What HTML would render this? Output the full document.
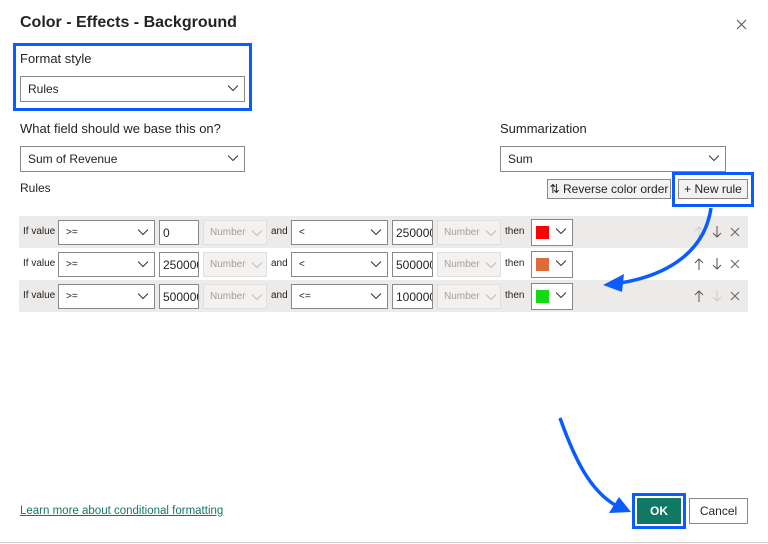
<!DOCTYPE html><html><head><style>
body{margin:0;width:768px;height:544px;background:#fff;font-family:"Liberation Sans",sans-serif;color:#252423;position:relative;overflow:hidden}
.a{position:absolute}
.dd{position:absolute;border:1px solid #8a8886;background:#fff;box-sizing:border-box;font-size:12px;padding-left:7px;display:flex;align-items:center}
.dd svg{position:absolute;right:6px;top:50%;margin-top:-4px}
.inp{position:absolute;border:1px solid #8a8886;background:#fff;box-sizing:border-box;font-size:12px;padding-left:3px;display:flex;align-items:center;overflow:hidden;white-space:nowrap}
.num{position:absolute;border:1px solid #e1dfdd;background:#f3f2f1;box-sizing:border-box;font-size:10px;color:#a19f9d;padding-left:6px;display:flex;align-items:center}
.num svg{position:absolute;right:4px;top:50%;margin-top:-3px}
.row{position:absolute;left:19px;width:729px;height:32px}
.sm{position:absolute;font-size:10px}
.blue{position:absolute;border:3px solid #0a5cff;box-sizing:border-box}
</style></head><body>
<div class="a" style="left:20px;top:14px;font-size:16px;font-weight:bold;color:#252423">Color - Effects - Background</div>
<svg class="a" style="left:736px;top:19px" width="11" height="11"><path d="M1 1L10 10M10 1L1 10" stroke="#605e5c" stroke-width="1.2"/></svg>
<div class="blue" style="left:13px;top:43px;width:239px;height:68px"></div>
<div class="a" style="left:20px;top:51px;font-size:13px">Format style</div>
<div class="dd" style="left:20px;top:76px;width:225px;height:26px">Rules<svg width="10" height="6"><path d="M0 0.5L5 5.5L10 0.5" fill="none" stroke="#333"/></svg></div>
<div class="a" style="left:20px;top:121px;font-size:13px">What field should we base this on?</div>
<div class="dd" style="left:20px;top:146px;width:225px;height:26px">Sum of Revenue<svg width="10" height="6"><path d="M0 0.5L5 5.5L10 0.5" fill="none" stroke="#333"/></svg></div>
<div class="a" style="left:500px;top:121px;font-size:13px">Summarization</div>
<div class="dd" style="left:500px;top:146px;width:226px;height:26px">Sum<svg width="10" height="6"><path d="M0 0.5L5 5.5L10 0.5" fill="none" stroke="#333"/></svg></div>
<div class="a" style="left:20px;top:181px;font-size:12px">Rules</div>
<div class="a" style="left:547px;top:179px;width:124px;height:20px;border:1px solid #8a8886;background:#f3f2f1;box-sizing:border-box;font-size:12px;text-align:center;line-height:18px">⇅ Reverse color order</div>
<div class="blue" style="left:672px;top:172px;width:82px;height:35px"></div>
<div class="a" style="left:678px;top:179px;width:70px;height:20px;border:1px solid #8a8886;background:#f3f2f1;box-sizing:border-box;font-size:12px;text-align:center;line-height:18px">+ New rule</div>

<div class="row" style="top:216px;background:#edebe9"></div>
<div class="row" style="top:248px;background:#fff"></div>
<div class="row" style="top:280px;background:#edebe9"></div>

<div id="r"></div>
<script>
var rows=[["0","<","250000","#ff0000",0],["250000","<","500000","#e06a37",0],["500000","<=","1000000","#10dd10",1]];
var h="";
var ch='<svg width="10" height="6"><path d="M0 0.5L5 5.5L10 0.5" fill="none" stroke="#333"/></svg>';
var chg='<svg width="10" height="6"><path d="M0 0.5L5 5.5L10 0.5" fill="none" stroke="#bbb"/></svg>';
rows.forEach(function(r,i){var y=216+i*32;
h+='<div class="sm" style="left:23px;top:'+(y+10)+'px">If value</div>';
h+='<div class="dd" style="left:58px;top:'+(y+4)+'px;width:97px;height:25px;font-size:10px">&gt;=' +ch+'</div>';
h+='<div class="inp" style="left:159px;top:'+(y+4)+'px;width:40px;height:25px">'+r[0]+'</div>';
h+='<div class="num" style="left:203px;top:'+(y+4)+'px;width:64px;height:25px">Number'+chg+'</div>';
h+='<div class="sm" style="left:271px;top:'+(y+10)+'px">and</div>';
h+='<div class="dd" style="left:291px;top:'+(y+4)+'px;width:97px;height:25px;font-size:10px">'+r[1].replace("<","&lt;")+ch+'</div>';
h+='<div class="inp" style="left:392px;top:'+(y+4)+'px;width:41px;height:25px">'+r[2]+'</div>';
h+='<div class="num" style="left:437px;top:'+(y+4)+'px;width:64px;height:25px">Number'+chg+'</div>';
h+='<div class="sm" style="left:505px;top:'+(y+10)+'px">then</div>';
h+='<div class="dd" style="left:531px;top:'+(y+3)+'px;width:42px;height:27px"><span style="width:13px;height:13px;background:'+r[3]+';display:block;margin-left:-3px"></span><svg style="top:8px;margin:0" width="10" height="6"><path d="M0 0.5L5 5.5L10 0.5" fill="none" stroke="#333"/></svg></div>';
var up=i==0?"#ccc":"#555",dn=i==2?"#ccc":"#555";
h+='<svg class="a" style="left:694px;top:'+(y+10)+'px" width="50" height="12"><path d="M5 12V1M1 5L5 1L9 5" fill="none" stroke="'+up+'"/><path d="M23 0V11M19 7L23 11L27 7" fill="none" stroke="'+dn+'"/><path d="M37 2L45 10M45 2L37 10" stroke="#666"/></svg>';
});
document.getElementById("r").outerHTML=h;
</script>

<svg class="a" style="left:0;top:0" width="768" height="544">
<path d="M711 208C705 250 670 275 620 283" fill="none" stroke="#0a5cff" stroke-width="3.5"/>
<path d="M603 285L624 274L622 292Z" fill="#0a5cff"/>
<path d="M560 418C575 460 590 490 615 505" fill="none" stroke="#0a5cff" stroke-width="3.5"/>
<path d="M631 512L609 513L619 497Z" fill="#0a5cff"/>
<line x1="0" y1="542.5" x2="768" y2="542.5" stroke="#d0d0d0"/>
</svg>
<div class="a" style="left:20px;top:505px;font-size:11.5px;color:#117865;text-decoration:underline">Learn more about conditional formatting</div>
<div class="blue" style="left:632px;top:493px;width:54px;height:36px"></div>
<div class="a" style="left:637px;top:498px;width:44px;height:26px;background:#117865;color:#fff;font-size:12px;font-weight:bold;text-align:center;line-height:26px">OK</div>
<div class="a" style="left:689px;top:498px;width:59px;height:26px;border:1px solid #8a8886;box-sizing:border-box;font-size:12px;text-align:center;line-height:24px">Cancel</div>
</body></html>
